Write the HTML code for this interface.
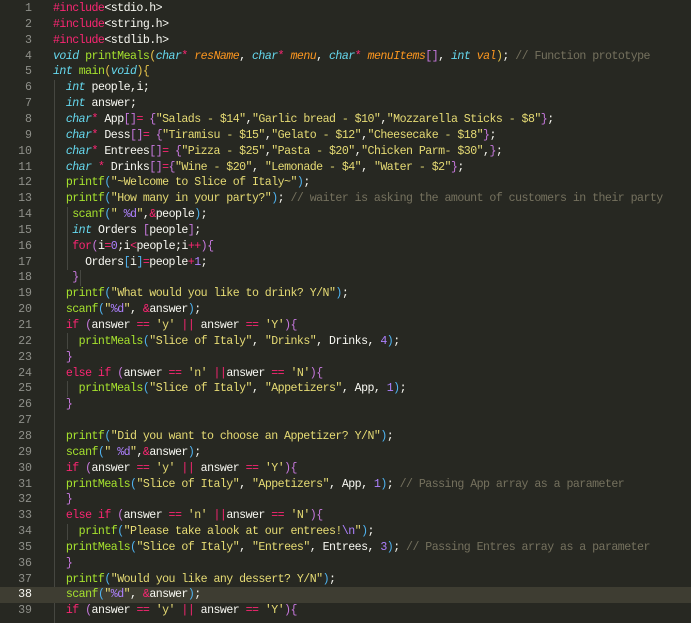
<!DOCTYPE html>
<html><head><meta charset="utf-8"><style>
html,body{margin:0;padding:0;background:#272822;width:691px;height:623px;overflow:hidden}
#ed{position:relative;width:691px;height:623px;font-family:"Liberation Mono",monospace;font-size:11.6px;letter-spacing:-0.54px;color:#f8f8f2}
.l{position:absolute;left:0;width:691px;height:15.85px;line-height:15.85px;white-space:pre}
.n{position:absolute;left:0;width:32px;text-align:right;color:#8f908a;letter-spacing:0}
.c{position:absolute;left:53px}
.hl{background:#3e3d32}
.hl .n{color:#f8f8f2}
.k{color:#f92672}.f{color:#a6e22e}.s{color:#e6db74}.t{color:#66d9ef;font-style:italic}.p{color:#fd971f;font-style:italic}
.cm{color:#75715e}.nu{color:#ae81ff}.b1{color:#e6c34a}.b2{color:#c678dd}.b3{color:#4fb3f0}
.g{position:absolute;width:1px;background:#464741}
</style></head><body><div id="ed">
<div class="g" style="left:54px;top:80px;height:543px"></div>
<div class="g" style="left:67px;top:207px;height:63px"></div>
<div class="g" style="left:80px;top:270px;height:16px"></div>
<div class="g" style="left:67px;top:333px;height:16px"></div>
<div class="g" style="left:67px;top:381px;height:16px"></div>
<div class="g" style="left:67px;top:524px;height:16px"></div>
<div id="lines"></div>
</div>
<script>
var L=[
'<span class="k">#include</span>&lt;stdio.h&gt;',
'<span class="k">#include</span>&lt;string.h&gt;',
'<span class="k">#include</span>&lt;stdlib.h&gt;',
'<span class="t">void</span> <span class="f">printMeals</span><span class="b1">(</span><span class="t">char</span><span class="k">*</span> <span class="p">resName</span>, <span class="t">char</span><span class="k">*</span> <span class="p">menu</span>, <span class="t">char</span><span class="k">*</span> <span class="p">menuItems</span><span class="b2">[]</span>, <span class="t">int</span> <span class="p">val</span><span class="b1">)</span>; <span class="cm">// Function prototype</span>',
'<span class="t">int</span> <span class="f">main</span><span class="b1">(</span><span class="t">void</span><span class="b1">){</span>',
'  <span class="t">int</span> people,i;',
'  <span class="t">int</span> answer;',
'  <span class="t">char</span><span class="k">*</span> App<span class="b2">[]</span><span class="k">=</span> <span class="b2">{</span><span class="s">"Salads - $14"</span>,<span class="s">"Garlic bread - $10"</span>,<span class="s">"Mozzarella Sticks - $8"</span><span class="b2">}</span>;',
'  <span class="t">char</span><span class="k">*</span> Dess<span class="b2">[]</span><span class="k">=</span> <span class="b2">{</span><span class="s">"Tiramisu - $15"</span>,<span class="s">"Gelato - $12"</span>,<span class="s">"Cheesecake - $18"</span><span class="b2">}</span>;',
'  <span class="t">char</span><span class="k">*</span> Entrees<span class="b2">[]</span><span class="k">=</span> <span class="b2">{</span><span class="s">"Pizza - $25"</span>,<span class="s">"Pasta - $20"</span>,<span class="s">"Chicken Parm- $30"</span>,<span class="b2">}</span>;',
'  <span class="t">char</span> <span class="k">*</span> Drinks<span class="b2">[]</span><span class="k">=</span><span class="b2">{</span><span class="s">"Wine - $20"</span>, <span class="s">"Lemonade - $4"</span>, <span class="s">"Water - $2"</span><span class="b2">}</span>;',
'  <span class="f">printf</span><span class="b3">(</span><span class="s">"~Welcome to Slice of Italy~"</span><span class="b3">)</span>;',
'  <span class="f">printf</span><span class="b3">(</span><span class="s">"How many in your party?"</span><span class="b3">)</span>; <span class="cm">// waiter is asking the amount of customers in their party</span>',
'   <span class="f">scanf</span><span class="b3">(</span><span class="s">" <span class="nu">%d</span>"</span>,<span class="k">&amp;</span>people<span class="b3">)</span>;',
'   <span class="t">int</span> Orders <span class="b2">[</span>people<span class="b2">]</span>;',
'   <span class="k">for</span><span class="b2">(</span>i<span class="k">=</span><span class="nu">0</span>;i<span class="k">&lt;</span>people;i<span class="k">++</span><span class="b2">){</span>',
'     Orders<span class="b3">[</span>i<span class="b3">]</span><span class="k">=</span>people<span class="k">+</span><span class="nu">1</span>;',
'   <span class="b2">}</span>',
'  <span class="f">printf</span><span class="b3">(</span><span class="s">"What would you like to drink? Y/N"</span><span class="b3">)</span>;',
'  <span class="f">scanf</span><span class="b3">(</span><span class="s">"<span class="nu">%d</span>"</span>, <span class="k">&amp;</span>answer<span class="b3">)</span>;',
'  <span class="k">if</span> <span class="b2">(</span>answer <span class="k">==</span> <span class="s">\'y\'</span> <span class="k">||</span> answer <span class="k">==</span> <span class="s">\'Y\'</span><span class="b2">){</span>',
'    <span class="f">printMeals</span><span class="b3">(</span><span class="s">"Slice of Italy"</span>, <span class="s">"Drinks"</span>, Drinks, <span class="nu">4</span><span class="b3">)</span>;',
'  <span class="b2">}</span>',
'  <span class="k">else if</span> <span class="b2">(</span>answer <span class="k">==</span> <span class="s">\'n\'</span> <span class="k">||</span>answer <span class="k">==</span> <span class="s">\'N\'</span><span class="b2">){</span>',
'    <span class="f">printMeals</span><span class="b3">(</span><span class="s">"Slice of Italy"</span>, <span class="s">"Appetizers"</span>, App, <span class="nu">1</span><span class="b3">)</span>;',
'  <span class="b2">}</span>',
'',
'  <span class="f">printf</span><span class="b3">(</span><span class="s">"Did you want to choose an Appetizer? Y/N"</span><span class="b3">)</span>;',
'  <span class="f">scanf</span><span class="b3">(</span><span class="s">" <span class="nu">%d</span>"</span>,<span class="k">&amp;</span>answer<span class="b3">)</span>;',
'  <span class="k">if</span> <span class="b2">(</span>answer <span class="k">==</span> <span class="s">\'y\'</span> <span class="k">||</span> answer <span class="k">==</span> <span class="s">\'Y\'</span><span class="b2">){</span>',
'  <span class="f">printMeals</span><span class="b3">(</span><span class="s">"Slice of Italy"</span>, <span class="s">"Appetizers"</span>, App, <span class="nu">1</span><span class="b3">)</span>; <span class="cm">// Passing App array as a parameter</span>',
'  <span class="b2">}</span>',
'  <span class="k">else if</span> <span class="b2">(</span>answer <span class="k">==</span> <span class="s">\'n\'</span> <span class="k">||</span>answer <span class="k">==</span> <span class="s">\'N\'</span><span class="b2">){</span>',
'    <span class="f">printf</span><span class="b3">(</span><span class="s">"Please take alook at our entrees!<span class="nu">\\n</span>"</span><span class="b3">)</span>;',
'  <span class="f">printMeals</span><span class="b3">(</span><span class="s">"Slice of Italy"</span>, <span class="s">"Entrees"</span>, Entrees, <span class="nu">3</span><span class="b3">)</span>; <span class="cm">// Passing Entres array as a parameter</span>',
'  <span class="b2">}</span>',
'  <span class="f">printf</span><span class="b3">(</span><span class="s">"Would you like any dessert? Y/N"</span><span class="b3">)</span>;',
'  <span class="f">scanf</span><span class="b3">(</span><span class="s">"<span class="nu">%d</span>"</span>, <span class="k">&amp;</span>answer<span class="b3">)</span>;',
'  <span class="k">if</span> <span class="b2">(</span>answer <span class="k">==</span> <span class="s">\'y\'</span> <span class="k">||</span> answer <span class="k">==</span> <span class="s">\'Y\'</span><span class="b2">){</span>'
];
var h='';
for(var i=0;i<L.length;i++){
 h+='<div class="l'+(i==37?' hl':'')+'" style="top:'+(1+i*15.85).toFixed(2)+'px"><span class="n">'+(i+1)+'</span><span class="c">'+L[i]+'</span></div>';
}
document.getElementById('lines').innerHTML=h;
</script>
</body></html>
